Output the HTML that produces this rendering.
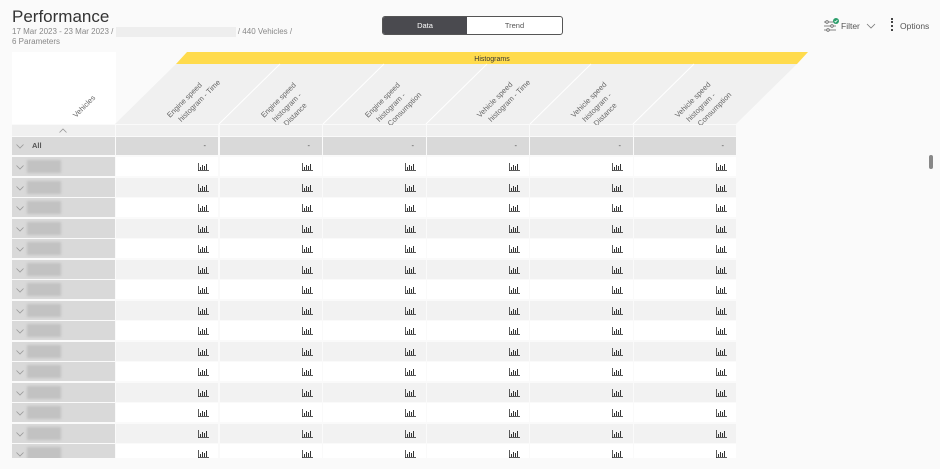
<!DOCTYPE html>
<html><head><meta charset="utf-8"><style>
*{margin:0;padding:0;box-sizing:border-box}
body{width:940px;height:469px;background:#fafafa;font-family:"Liberation Sans",sans-serif;position:relative;overflow:hidden;color:#444}
.a{position:absolute}
h1{position:absolute;left:12px;top:7px;font-size:17px;font-weight:normal;color:#333}
.sub{font-size:8px;color:#888}
.tog{position:absolute;left:382px;top:16px;width:181px;height:19px;border:1px solid #555;border-radius:3px;overflow:hidden;background:#fff;font-size:7.5px}
.tog div{position:absolute;top:0;height:17px;line-height:17px;text-align:center}
.cell{position:absolute;height:19px}
</style></head><body>
<h1>Performance</h1>
<div class="a sub" style="left:12px;top:27px">17 Mar 2023 - 23 Mar 2023 / <span style="display:inline-block;width:120px;height:10px;background:#eee;vertical-align:middle"></span> / 440 Vehicles /</div>
<div class="a sub" style="left:12px;top:37px">6 Parameters</div>
<div class="tog"><div style="left:0;width:84px;background:#4a4a4f;color:#fff">Data</div><div style="left:84px;width:95px;color:#555">Trend</div></div>
<svg class="a" style="left:823px;top:18px" width="16" height="14" viewBox="0 0 16 14"><g stroke="#666" stroke-width="0.8" fill="none"><line x1="1" y1="4" x2="13" y2="4"/><line x1="1" y1="8" x2="13" y2="8"/><line x1="1" y1="12" x2="13" y2="12"/><circle cx="4" cy="4" r="1.3" fill="#fff"/><circle cx="9" cy="8" r="1.3" fill="#fff"/><circle cx="5" cy="12" r="1.3" fill="#fff"/></g><circle cx="13" cy="3" r="3" fill="#2a9d6a"/><path d="M11.6 3l1 1 1.8-2" stroke="#fff" stroke-width="0.8" fill="none"/></svg>
<div class="a" style="left:841px;top:21px;font-size:8.5px;color:#555">Filter</div>
<svg class="a" style="left:866px;top:23px" width="10" height="6"><path d="M1 1l4 4 4-4" stroke="#777" stroke-width="0.8" fill="none"/></svg>
<div class="a" style="left:891px;top:18px;width:2px;height:13px;border-left:2px dotted #444"></div>
<div class="a" style="left:900px;top:21px;font-size:8.5px;color:#555">Options</div>
<div class="a" style="left:12px;top:52px;width:104px;height:72px;background:#fff"></div>
<svg class="a" style="left:0;top:0" width="940" height="140">
<polygon points="187,52 808,52 797,64 176,64" fill="#ffdb4d"/>
<text x="492" y="61" font-size="7" fill="#333" text-anchor="middle" font-family="Liberation Sans">Histograms</text>
<polygon points="176,64 797,64 736,124 115,124" fill="#f0f0f0"/>
<g stroke="#fff" stroke-width="1"><line x1="219" y1="124" x2="280" y2="64"/><line x1="323" y1="124" x2="384" y2="64"/><line x1="426" y1="124" x2="487" y2="64"/><line x1="530" y1="124" x2="591" y2="64"/><line x1="633" y1="124" x2="694" y2="64"/></g>
<g font-size="7.5" fill="#666" font-family="Liberation Sans">
<text transform="translate(76,118) rotate(-45)">Vehicles</text>
<g transform="translate(170,118) rotate(-45)"><text>Engine speed</text><text x="5" y="11">histogram - Time</text></g>
<g transform="translate(264,118) rotate(-45)"><text>Engine speed</text><text x="5" y="11">histogram -</text><text x="10" y="22">Distance</text></g>
<g transform="translate(368,118) rotate(-45)"><text>Engine speed</text><text x="5" y="11">histogram -</text><text x="10" y="22">Consumption</text></g>
<g transform="translate(480,118) rotate(-45)"><text>Vehicle speed</text><text x="5" y="11">histogram - Time</text></g>
<g transform="translate(574,118) rotate(-45)"><text>Vehicle speed</text><text x="5" y="11">histogram -</text><text x="10" y="22">Distance</text></g>
<g transform="translate(678,118) rotate(-45)"><text>Vehicle speed</text><text x="5" y="11">histogram -</text><text x="10" y="22">Consumption</text></g>
</g>
</svg>
<div class="a" style="left:929px;top:155px;width:4px;height:14px;background:#888;border-radius:2px"></div>
<div id="t"></div>
<script>
var L=[12,116,220,323,427,530,634],W=[103,102,102,103,102,103,102];
var ch='<svg width="8" height="5"><path d="M0.5 0.5l3.5 3.5 3.5-3.5" stroke="#999" stroke-width="0.8" fill="none"/></svg>';
var h='';
for(var c=0;c<7;c++)h+='<div class="cell" style="left:'+L[c]+'px;top:125px;width:'+W[c]+'px;height:11px;background:#f0f0f0"></div>';
h+='<svg class="a" style="left:59px;top:128px" width="8" height="5"><path d="M0.5 4.5l3.5-3.5 3.5 3.5" stroke="#999" stroke-width="0.8" fill="none"/></svg>';
for(var c=0;c<7;c++)h+='<div class="cell" style="left:'+L[c]+'px;top:137px;width:'+W[c]+'px;height:18px;background:#d9d9d9;font-size:7.5px;line-height:18px;'+(c?'text-align:right;padding-right:12px':'padding-left:20px')+'">'+(c?'-':'<b style="color:#555">All</b>')+'</div>';
h+='<div class="a" style="left:16px;top:144px;line-height:0">'+ch+'</div>';
var ic='<svg width="11" height="8" viewBox="0 0 11 8"><g fill="#333"><rect x="0" y="0" width="0.8" height="8"/><rect x="0" y="7.2" width="11" height="0.8"/><rect x="2" y="4" width="1" height="3"/><rect x="4" y="2" width="1" height="5"/><rect x="6" y="3" width="1" height="4"/><rect x="8" y="1" width="1" height="6"/></g></svg>';
for(var r=0;r<15;r++){var y=157+r*20.5;var bg=r%2?'#f2f2f2':'#fff';
 h+='<div class="cell" style="left:12px;top:'+y+'px;width:103px;background:#d9d9d9"></div>';
 h+='<div class="a" style="left:27px;top:'+(y+3)+'px;width:34px;height:13px;background:#c2c2c2;filter:blur(1px)"></div>';
 h+='<div class="a" style="left:16px;top:'+(y+8)+'px;line-height:0">'+ch+'</div>';
 for(var c=1;c<7;c++)h+='<div class="cell" style="left:'+L[c]+'px;top:'+y+'px;width:'+W[c]+'px;background:'+bg+'"><div class="a" style="left:82px;top:6px;line-height:0">'+ic+'</div></div>';}
document.getElementById('t').innerHTML=h;
</script>
<div class="a" style="left:0;top:458px;width:940px;height:11px;background:#fafafa"></div>
</body></html>
